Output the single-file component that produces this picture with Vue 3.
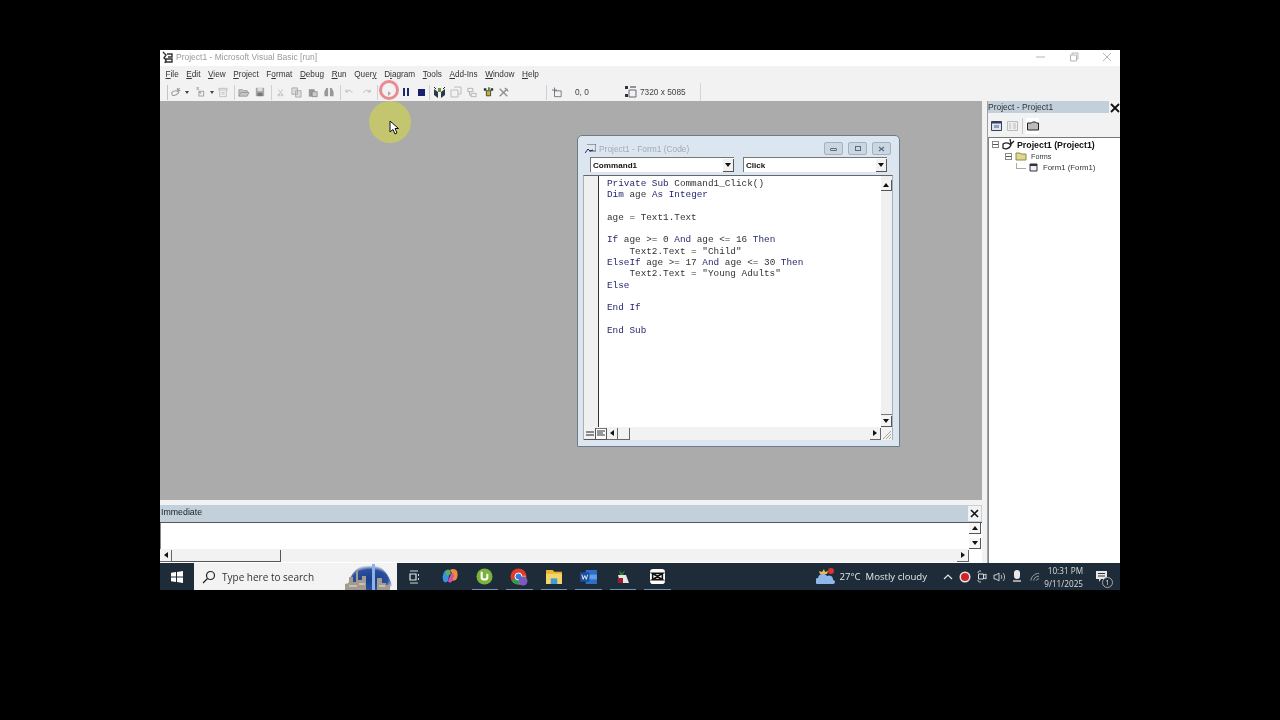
<template>
  <div class="screen">
    <!-- title bar -->
    <div class="titlebar">
      <svg class="app-ico" width="13" height="13" viewBox="0 0 13 13"><path d="M2 1l3 3-2 3 2 2-1 3M6 3h5v3H7M5 8h6v3H5z" fill="none" stroke="#333" stroke-width="1.4"/></svg>
      <span class="title-text">Project1 - Microsoft Visual Basic [run]</span>
      <div class="win-btns">
        <svg width="10" height="10" viewBox="0 0 10 10"><path d="M0 5h9" stroke="#b5b5b5"/></svg>
        <svg width="10" height="10" viewBox="0 0 10 10"><path d="M1.5 3h6v6h-6zM3 3V1h6v6H7.500" fill="none" stroke="#b5b5b5"/></svg>
        <svg width="10" height="10" viewBox="0 0 10 10"><path d="M1 1l8 8M9 1l-8 8" stroke="#b5b5b5"/></svg>
      </div>
    </div>

    <!-- menu -->
    <div class="menubar">
      <span v-for="m in menus" :key="m.t" class="menu-item"><template v-if="m.i > 0">{{ m.t.slice(0, m.i) }}</template><u>{{ m.t[m.i] }}</u>{{ m.t.slice(m.i + 1) }}</span>
    </div>

    <!-- toolbar -->
    <div class="toolbar">
      <div class="tool-row">
        <span class="grip"></span>
        <svg class="t1" width="12" height="12" viewBox="0 0 15 14"><path d="M2 8c2-3 6-3 9-1-1 3-5 5-8 4zM9 2l1 3M12 2l-2 3M13 5h-3" fill="none" stroke="#9a9a9a" stroke-width="1.300"/></svg>
        <span class="drop d1"></span>
        <svg class="t2" width="11" height="12" viewBox="0 0 14 14"><path d="M2 1l3 3M5 1L2 4M5 6h6v6H5zM5 6l3 3" fill="none" stroke="#a5a5a5" stroke-width="1.300"/></svg>
        <span class="drop d2"></span>
        <svg class="t3" width="10" height="11" viewBox="0 0 12 12"><path d="M1 1h10v2H1zM2 3v8h8V3M4 6h4M4 8h4" fill="none" stroke="#bbb"/></svg>
        <span class="sep s1"></span>
        <svg class="t4" width="12" height="11" viewBox="0 0 13 12"><path d="M1 10V3h4l1 1h4v2M1 10l2-4h9l-2 4z" fill="#c7c7c7" stroke="#999"/></svg>
        <svg class="t5" width="10" height="10" viewBox="0 0 12 12"><path d="M1 1h10v10H1z" fill="#a5a5a5"/><path d="M3 1h6v4H3z" fill="#ddd"/><path d="M3 7h6v4H3z" fill="#777"/></svg>
        <span class="sep s2"></span>
        <svg class="t6" width="7" height="11" viewBox="0 0 11 12"><path d="M2 1l5 7M9 1L4 8" stroke="#bbb" fill="none" stroke-width="1.300"/><circle cx="3" cy="10" r="1.500" fill="none" stroke="#aaa"/><circle cx="8" cy="10" r="1.500" fill="none" stroke="#aaa"/></svg>
        <svg class="t7" width="11" height="11" viewBox="0 0 12 12"><path d="M1 1h6v7H1zM5 4h6v7H5z" fill="#ddd" stroke="#aaa"/></svg>
        <svg class="t7b" width="10" height="11" viewBox="0 0 12 12"><path d="M1 2h7v9H1z" fill="#999"/><path d="M5 5h6v6H5z" fill="#ccc" stroke="#888"/></svg>
        <svg class="t7c" width="12" height="11" viewBox="0 0 12 12"><path d="M1 5l2-4h2v9H1zM11 5L9 1H7v9h4z" fill="#999"/></svg>
        <span class="sep s3"></span>
        <svg class="t8" width="9" height="8" viewBox="0 0 11 10"><path d="M1 2v3h3M1 5c2-3 6-3 8 1" fill="none" stroke="#b0b0b0"/></svg>
        <svg class="t9" width="9" height="8" viewBox="0 0 11 10"><path d="M10 2v3H7M10 5C8 2 4 2 2 6" fill="none" stroke="#b0b0b0"/></svg>
        <span class="sep s4"></span>
        <svg class="t10" width="10" height="10" viewBox="0 0 10 10"><path d="M4 4l3 2.500L4 9z" fill="#aaa"/></svg>
        <svg class="t11" width="6" height="8" viewBox="0 0 6 8"><path d="M0 0h2v8H0zM4 0h2v8H4z" fill="#1d2a68"/></svg>
        <svg class="t12" width="7" height="7" viewBox="0 0 7 7"><path d="M0 0h7v7H0z" fill="#16206e"/></svg>
        <span class="sep s5"></span>
        <svg class="t13" width="13" height="13" viewBox="0 0 13 13"><path d="M1 3l4 3v6L1 9zM12 3L8 6v6l4-3z" fill="#2b3a4a"/><path d="M5 2h3v4H5z" fill="#6f8f3a"/><path d="M1 1l2 2M12 1l-2 2" stroke="#222"/></svg>
        <svg class="t14" width="12" height="12" viewBox="0 0 12 12"><path d="M1 4h7v7H1zM4 1h7v7H8" fill="none" stroke="#bcbcbc"/></svg>
        <svg class="t15" width="10" height="11" viewBox="0 0 12 12"><path d="M1 1h6v4H1zM5 7h6v4H5zM3 5v4h2" fill="none" stroke="#aaa"/></svg>
        <svg class="t16" width="11" height="12" viewBox="0 0 13 13"><path d="M1 2h3v3H1zM9 2h3v3H9z" fill="#2a3a2a"/><path d="M4 5h5v6H4z" fill="#c6b52c" stroke="#333"/><path d="M6 1h2v3H6z" fill="#3d7f3a"/></svg>
        <svg class="t17" width="11" height="11" viewBox="0 0 13 13"><path d="M2 2l9 9M11 2L2 11M8 1l4 4" fill="none" stroke="#8d8d8d" stroke-width="1.500"/></svg>
        <span class="sep s6"></span>
        <svg class="t18" width="10" height="11" viewBox="0 0 12 12"><path d="M3 4h8v7H3zM3 0v6M0 3h6" fill="none" stroke="#667"/></svg>
        <span class="pos">0, 0</span>
        <svg width="12" height="12" viewBox="0 0 12 12"><path d="M4 4h7v7H4z" fill="none" stroke="#667"/><path d="M0 0h3v3H0zM0 8h3v3H0z" fill="#333"/><path d="M5 1h6" stroke="#333"/></svg>
        <span class="size">7320 x 5085</span>
      </div>
      <div class="tool-rest"></div>
    </div>

    <!-- work area -->
    <div class="work">
      <div class="left-col">
        <div class="mdi">
          <div class="code-win">
            <div class="cw-title">
              <svg width="11" height="10" viewBox="0 0 11 10"><path d="M2 0h9v7H4" fill="none" stroke="#556"/><path d="M0 9l3-4 2 2 3-1" fill="none" stroke="#225"/></svg>
              <span>Project1 - Form1 (Code)</span>
              <div class="cw-btns">
                <span class="cb"><i class="b-min"></i></span>
                <span class="cb"><i class="b-max"></i></span>
                <span class="cb">
                  <svg width="7" height="6" viewBox="0 0 7 6"><path d="M1 1l5 4M6 1L1 5" stroke="#667" stroke-width="1.200"/></svg>
                </span>
              </div>
            </div>
            <div class="cw-combos">
              <div class="combo"><span>Command1</span><span class="combo-btn"><b class="arr down"></b></span></div>
              <div class="combo"><span>Click</span><span class="combo-btn"><b class="arr down"></b></span></div>
            </div>
            <div class="cw-frame">
              <div class="cw-body">
                <div class="margin"></div>
                <div class="code">
                  <div v-for="(line, i) in code" :key="i" class="line"><span v-for="(s, j) in line" :key="j" :class="{ kw: s.k }">{{ s.t }}</span></div>
                </div>
                <div class="vscroll">
                  <span class="sbtn"><b class="arr up"></b></span>
                  <span class="vtrack"></span>
                  <span class="sbtn"><b class="arr down"></b></span>
                </div>
              </div>
              <div class="cw-bottom">
                <span class="view-btn"><svg width="8" height="5" viewBox="0 0 8 5"><path d="M0 1h8M0 4h8" stroke="#222"/></svg></span>
                <span class="view-btn on"><svg width="8" height="7" viewBox="0 0 8 7"><path d="M0 1h8M0 3h6M0 5h8" stroke="#333"/></svg></span>
                <span class="hbtn"><b class="arr left"></b></span>
                <span class="hthumb"></span>
                <span class="htrack"></span>
                <span class="hbtn end"><b class="arr right"></b></span>
                <svg class="corner" width="10" height="12" viewBox="0 0 10 12"><path d="M9 3l-8 8M9 6l-5 5M9 9l-2 2" stroke="#a5a5a5"/></svg>
              </div>
            </div>
          </div>
        </div>

        <div class="split"></div>
        <div class="imm-title">
          <span>Immediate</span>
          <span class="close-x">
            <svg width="9" height="9" viewBox="0 0 9 9"><path d="M1 1l7 7M8 1L1 8" stroke="#111" stroke-width="1.600"/></svg>
          </span>
        </div>
        <div class="imm-body">
          <div class="imm-main">
            <div class="imm-text"></div>
            <div class="imm-h">
              <span class="hbtn im"><b class="arr left"></b></span>
              <span class="imm-thumb"></span>
              <span class="htrack"></span>
              <span class="hbtn im"><b class="arr right"></b></span>
            </div>
          </div>
          <div class="imm-v">
            <span class="sbtn"><b class="arr up"></b></span>
            <span class="vgap"></span>
            <span class="sbtn"><b class="arr down"></b></span>
          </div>
        </div>
      </div>

      <div class="divider"></div>

      <div class="project">
        <div class="p-title">
          <span>Project - Project1</span>
          <span class="p-close">
            <svg width="10" height="10" viewBox="0 0 10 10"><path d="M1 1l8 8M9 1L1 9" stroke="#111" stroke-width="1.800"/></svg>
          </span>
        </div>
        <div class="p-tools">
          <svg width="11" height="10" viewBox="0 0 11 10"><path d="M.5.5h10v9H.5z" fill="#dfe4ee" stroke="#34405c"/><path d="M.5.5h10v2H.5z" fill="#34405c"/><path d="M3 4h5v3H3z" fill="#8f9fc0"/></svg>
          <svg width="11" height="10" viewBox="0 0 11 10"><path d="M.5.5h10v9H.5z" fill="#eee" stroke="#bbb"/><path d="M2 3h2M2 5h2M2 7h2M6 3h3M6 5h3M6 7h3" stroke="#bbb"/></svg>
          <span class="p-sep"></span>
          <span class="p-folder">
            <svg width="12" height="10" viewBox="0 0 12 10"><path d="M.5 9V2h4l1-1h3l1 1h2v7z" fill="#bbb" stroke="#222"/></svg>
          </span>
        </div>
        <div class="tree">
          <div class="node n0">
            <span class="box"></span>
            <svg width="13" height="12" viewBox="0 0 13 12"><path d="M1 5c3-2 6-1 8 1-1 3-5 5-8 3zM8 0l1 5M12 2L9 5" fill="none" stroke="#222" stroke-width="1.300"/></svg>
            <b>Project1 (Project1)</b>
          </div>
          <div class="node n1">
            <span class="box"></span>
            <svg width="13" height="10" viewBox="0 0 13 10"><path d="M1 9V2h4l1 1h5v6z" fill="#dfd88c" stroke="#8a8a50"/></svg>
            <span class="t-forms">Forms</span>
          </div>
          <div class="node n2">
            <span class="elbow"></span>
            <svg width="11" height="10" viewBox="0 0 11 10"><path d="M1 1h7v7H1z" fill="#eef" stroke="#333"/><path d="M1 1h7v2H1z" fill="#333"/></svg>
            <span class="t-form1">Form1 (Form1)</span>
          </div>
        </div>
      </div>
    </div>

    <!-- taskbar -->
    <div class="taskbar">
      <div class="start">
        <svg width="12" height="12" viewBox="0 0 12 12"><path d="M0 1.700l5-.7v4.600H0zM6 .9L12 0v5.600H6zM0 6.400h5V11l-5-.7zM6 6.400h6V12l-6-.9z" fill="#fff"/></svg>
      </div>
      <div class="search">
        <svg width="14" height="14" viewBox="0 0 14 14"><circle cx="8.500" cy="5.500" r="4" fill="none" stroke="#222" stroke-width="1.200"/><path d="M5.500 8.500L1 13" stroke="#222" stroke-width="1.300"/></svg>
        <span>Type here to search</span>
        <svg class="city" width="52" height="27" viewBox="0 0 52 27">
          <defs>
            <radialGradient id="sky" cx="50%" cy="60%" r="55%">
              <stop offset="0" stop-color="#1a3d8c"/>
              <stop offset=".7" stop-color="#2a4f9c"/>
              <stop offset="1" stop-color="#f3f3f3"/>
            </radialGradient>
          </defs>
          <path d="M4 27C6 9 17 1 27 1s20 9 23 26z" fill="url(#sky)"/>
          <path d="M29 1h3v26h-3z" fill="#8bb4e4"/>
          <path d="M2 27v-6l4-1v-6h4v5h3V9l2-2v10h4v-4h4v14zM34 27V15h5v5h4v2h4v5z" fill="#a39b8f"/>
          <path d="M6 23h8M16 21h6M36 23h6" stroke="#e8e3d8"/>
        </svg>
      </div>
      <div class="apps">
        <span class="app">
          <svg width="11" height="14" viewBox="0 0 11 14"><path d="M1 1h8M1 13h8" stroke="#cfd6da"/><path d="M1 4h6v6H1z" fill="none" stroke="#dfe5e8" stroke-width="1.200"/><path d="M9.500 4v2M9.500 8v2" stroke="#cfd6da"/></svg>
        </span>
        <span class="app copilot">
          <svg width="17" height="17" viewBox="0 0 17 17"><path d="M3 3c2-2 4-2 5 0L6 13c-2 2-4 2-5-1-1-3 0-7 2-9z" fill="#3a8fe0"/><path d="M8 2c2-2 6-1 7 1 1 3 1 6-1 9l-4 1 1-6z" fill="#f08a3c"/><path d="M6 13l3-7c1-2 3 0 3 2l-2 5c-1 2-3 2-4 0z" fill="#d64fb0"/><path d="M3 3l5-1 1 4-4 2z" fill="#55b55a"/></svg>
        </span>
        <span class="app on">
          <svg width="17" height="17" viewBox="0 0 18 18"><circle cx="9" cy="9" r="8.500" fill="#7cb23a"/><path d="M6 4v6c0 3 6 3 6 0V6" fill="none" stroke="#fff" stroke-width="2.200"/></svg>
        </span>
        <span class="app on">
          <svg width="18" height="18" viewBox="0 0 18 18"><circle cx="8.500" cy="8.500" r="8" fill="#e33b2e"/><path d="M8.500 8.500L1.500 12.500A8 8 0 0 0 9 16.500z" fill="#2f9d4e"/><path d="M8.500 8.500l7-1a8 8 0 0 1-6.500 9z" fill="#f3c11b"/><circle cx="8.500" cy="8.500" r="3.500" fill="#2d7fe0" stroke="#fff"/><circle cx="13" cy="13" r="4.500" fill="#7c5ac2"/></svg>
        </span>
        <span class="app on">
          <svg width="16" height="14" viewBox="0 0 17 15"><path d="M0 0h7l2 2h8v13H0z" fill="#e8b62c"/><path d="M0 4h17v11H0z" fill="#f6d568"/><path d="M5 9h7v6H5z" fill="#3f9ad6"/></svg>
        </span>
        <span class="app on">
          <svg width="17" height="14" viewBox="0 0 18 15"><path d="M6 0h12v15H6z" fill="#2f6fc7"/><path d="M6 5h12v5H6z" fill="#5fa0e6"/><path d="M0 2.500h10v10H0z" fill="#1b4f9f"/><path d="M2 5l1.300 5L5 6l1.700 4L8 5" fill="none" stroke="#fff" stroke-width=".9"/></svg>
        </span>
        <span class="app on">
          <svg width="16" height="16" viewBox="0 0 16 16"><path d="M4 1l3 3 3-3-2 5H5z" fill="#2c7a34"/><path d="M3 6h8l3 8H5z" fill="#e6e6ea"/><path d="M3 9h5v5H3z" fill="#9b1f2c"/></svg>
        </span>
        <span class="app on">
          <svg width="15" height="15" viewBox="0 0 17 17"><rect width="17" height="17" rx="3.500" fill="#fff"/><path d="M3 5h11L3 12h11zM3 5v7M14 5v7" fill="none" stroke="#111" stroke-width="1.800"/></svg>
        </span>
      </div>
      <div class="spacer"></div>
      <div class="tray">
        <svg class="weather" width="20" height="17" viewBox="0 0 20 17"><path d="M8 1l1 3 3-1-1 3h-7l-1-3 3 1z" fill="#f2b84a"/><path d="M2 16a3 3 0 0 1 0-6 5 5 0 0 1 9-2 4 4 0 0 1 6 4 2 2 0 0 1 0 4z" fill="#8fb7ea"/><circle cx="15" cy="3" r="3" fill="#d8352e"/></svg>
        <span class="w-text">27°C&nbsp; Mostly cloudy</span>
        <svg class="chev" width="10" height="6" viewBox="0 0 10 6"><path d="M1 5l4-4 4 4" fill="none" stroke="#e6e6e6" stroke-width="1.200"/></svg>
        <svg class="rec" width="12" height="12" viewBox="0 0 12 12"><circle cx="6" cy="6" r="5.500" fill="#e8e8e8"/><circle cx="6" cy="6" r="4" fill="#d3222a"/></svg>
        <svg class="meet" width="10" height="13" viewBox="0 0 10 13"><path d="M1 3c0-2 1-2 3-2M1 10c0 2 1 2 3 2" fill="none" stroke="#ccc"/><path d="M1.500 4h5v5h-5zM7 5l2-1v5L7 8" fill="none" stroke="#ddd"/></svg>
        <svg class="vol" width="12" height="10" viewBox="0 0 12 10"><path d="M1 3h2l3-2v8L3 7H1z" fill="none" stroke="#ccc"/><path d="M8 3c1 1 1 3 0 4M10 1c2 2 2 6 0 8" fill="none" stroke="#bbb"/></svg>
        <svg class="mic" width="8" height="13" viewBox="0 0 8 13"><rect x="1" width="6" height="9" rx="3" fill="#e8e8e8"/><path d="M0 11h8" stroke="#ccc" stroke-width="1.500"/></svg>
        <svg class="wifi" width="10" height="10" viewBox="0 0 11 10"><path d="M1 9c0-4 4-8 9-8M4 9c0-2 2-5 6-5M7 9c0-1 1-2 3-2" fill="none" stroke="#aaa"/></svg>
        <div class="clock"><span>10:31 PM</span><span>9/11/2025</span></div>
        <span class="notif">
          <svg width="14" height="14" viewBox="0 0 14 14"><path d="M1 1h11v8H6l-2 3V9H1z" fill="#e8e8e8"/><path d="M3 3.500h7M3 6h7" stroke="#333"/></svg>
          <em>1</em>
        </span>
      </div>
    </div>

    <!-- recording overlays -->
    <div class="hl"></div>
    <div class="ring"></div>
    <svg class="cursor" width="10" height="15" viewBox="0 0 10 15"><path d="M1 1v11l3-2.500 2 4.500 2-1-2-4.500h3.500z" fill="#fff" stroke="#111"/></svg>
  </div>
</template>

<script setup>
const menus = [
  { t: 'File', i: 0 },
  { t: 'Edit', i: 0 },
  { t: 'View', i: 0 },
  { t: 'Project', i: 0 },
  { t: 'Format', i: 1 },
  { t: 'Debug', i: 0 },
  { t: 'Run', i: 0 },
  { t: 'Query', i: 4 },
  { t: 'Diagram', i: 1 },
  { t: 'Tools', i: 0 },
  { t: 'Add-Ins', i: 0 },
  { t: 'Window', i: 0 },
  { t: 'Help', i: 0 }
]

// k marks the keywords, drawn in dark blue
const kw = (t) => ({ t, k: true })
const tx = (t) => ({ t, k: false })

const code = [
  [kw('Private Sub'), tx(' Command1_Click()')],
  [kw('Dim'), tx(' age '), kw('As Integer')],
  [],
  [tx('age = Text1.Text')],
  [],
  [kw('If'), tx(' age >= 0 '), kw('And'), tx(' age <= 16 '), kw('Then')],
  [tx('    Text2.Text = "Child"')],
  [kw('ElseIf'), tx(' age >= 17 '), kw('And'), tx(' age <= 30 '), kw('Then')],
  [tx('    Text2.Text = "Young Adults"')],
  [kw('Else')],
  [],
  [kw('End If')],
  [],
  [kw('End Sub')]
]
</script>

<style>
html, body {
  margin: 0;
  background: #000;
}
</style>

<style scoped>
.screen {
  position: relative;
  width: 960px;
  height: 540px;
  margin: 50px 0 0 160px;
  display: flex;
  flex-direction: column;
  overflow: hidden;
  background: #f2f2f2;
  font-family: "Liberation Sans", Arial, sans-serif;
  font-size: 9px;
  color: #222;
  filter: blur(0.3px);
}
svg { display: block; flex: none; }

.titlebar {
  height: 16px;
  background: #fff;
  display: flex;
  align-items: center;
  padding: 0 8px 2px 1px;
  box-sizing: border-box;
  gap: 2px;
}
.title-text { color: #9b9b9b; font-size: 8.500px; }
.win-btns { margin-left: auto; display: flex; gap: 23px; }

.menubar {
  height: 17px;
  display: flex;
  align-items: center;
  gap: 7.600px;
  padding: 0 0 1px 5.500px;
  box-sizing: border-box;
  font-size: 8.200px;
  color: #333;
}

.toolbar {
  height: 18px;
  display: flex;
  border-bottom: 1px solid #a0a0a0;
  box-sizing: content-box;
  margin-bottom: -1px;
}
.tool-row {
  width: 541px;
  display: flex;
  align-items: center;
  padding-left: 7px;
  box-sizing: border-box;
  border-right: 1px solid #d5d5d5;
  white-space: nowrap;
}
.tool-rest { flex: 1; }
.grip { width: 2px; height: 15px; border-left: 1px solid #c4c4c4; box-sizing: border-box; margin-right: 1px; }
.drop { width: 0; height: 0; border: 2px solid transparent; border-top: 3px solid #444; margin-top: 3px; }
.sep { width: 1px; height: 15px; background: #d0d0d0; flex: none; }
.d1 { margin-left: 3px; }
.t2 { margin-left: 6px; }
.d2 { margin-left: 4px; }
.t3 { margin-left: 4px; }
.s1 { margin-left: 6px; }
.t4 { margin-left: 3px; }
.t5 { margin-left: 5px; }
.s2 { margin-left: 6px; }
.t6 { margin-left: 5px; }
.t7 { margin-left: 7px; }
.t7b { margin-left: 6px; }
.t7c { margin-left: 5px; }
.s3 { margin-left: 5px; }
.t8 { margin-left: 4px; }
.t9 { margin-left: 8px; }
.s4 { margin-left: 6px; }
.t10 { margin-left: 6px; }
.t11 { margin-left: 9px; }
.t12 { margin-left: 9px; }
.s5 { margin-left: 4px; }
.t13 { margin-left: 3px; }
.t14 { margin-left: 4px; }
.t15 { margin-left: 5px; }
.t16 { margin-left: 6px; }
.t17 { margin-left: 4px; }
.s6 { margin-left: 37px; }
.t18 { margin-left: 5px; }
.pos { margin-left: 13px; width: 50px; flex: none; color: #444; font-size: 8.300px; }
.size { margin-left: 3px; color: #444; font-size: 8.300px; }

.work { flex: 1; min-height: 0; display: flex; }
.left-col { width: 822px; display: flex; flex-direction: column; }
.mdi { position: relative; flex: 1; background: #ababab; }

.code-win {
  position: absolute;
  left: 417px;
  top: 34px;
  width: 323px;
  height: 312px;
  box-sizing: border-box;
  border: 1px solid #6f7c86;
  border-radius: 5px 5px 1px 1px;
  background: #dbe6f0;
  padding: 0 6px 6px 5px;
  display: flex;
  flex-direction: column;
}
.cw-title {
  height: 21px;
  flex: none;
  display: flex;
  align-items: center;
  gap: 3px;
  padding: 4px 0 0 2px;
  box-sizing: border-box;
  color: #a3abb3;
  font-size: 8.400px;
}
.cw-btns { margin-left: auto; display: flex; gap: 5px; margin-right: 2px; }
.cb {
  width: 19px;
  height: 13px;
  box-sizing: border-box;
  border: 1px solid #a2b2c0;
  border-radius: 2px;
  background: #c9d7e3;
  display: flex;
  align-items: center;
  justify-content: center;
}
.b-min { width: 7px; height: 3px; border: 1px solid #667; border-radius: 1px; box-sizing: border-box; margin-top: 2px; }
.b-max { width: 6px; height: 5px; border: 1px solid #667; box-sizing: border-box; }
.cw-combos { display: flex; gap: 9px; padding-left: 7px; margin-right: 6px; flex: none; }
.combo {
  flex: 1;
  height: 15px;
  background: #fff;
  border-top: 1px solid #777;
  border-left: 1px solid #777;
  box-sizing: border-box;
  display: flex;
  align-items: center;
  justify-content: space-between;
  padding: 0 0 0 2px;
  color: #111;
  font-size: 8.100px;
  font-weight: 700;
}
.combo-btn {
  width: 11px;
  height: 13px;
  background: #f2f2f2;
  border-right: 1px solid #555;
  border-bottom: 1px solid #555;
  box-sizing: border-box;
  display: flex;
  align-items: center;
  justify-content: center;
}
.arr { width: 0; height: 0; border: 3px solid transparent; display: block; flex: none; }
.arr.down { border-top: 4px solid #111; border-bottom: 0; }
.arr.up { border-bottom: 4px solid #111; border-top: 0; }
.arr.left { border-right: 4px solid #111; border-left: 0; }
.arr.right { border-left: 4px solid #111; border-right: 0; }
.cw-frame {
  flex: 1;
  min-height: 0;
  margin-top: 3px;
  border-top: 1px solid #666;
  border-left: 1px solid #a5b0b8;
  border-right: 1px solid #a5b0b8;
  display: flex;
  flex-direction: column;
}
.cw-body { flex: 1; min-height: 0; display: flex; }
.margin { width: 14px; background: #f0f0f0; border-right: 1px solid #333; }
.code {
  flex: 1;
  background: #fff;
  padding: 2px 0 0 8px;
  font-family: "Liberation Mono", "Courier New", monospace;
  font-size: 9.350px;
  line-height: 11.300px;
  color: #333;
}
.line { height: 11.300px; white-space: pre; }
.kw { color: #27276f; }
.vscroll { width: 11px; background: #f0f0f0; display: flex; flex-direction: column; }
.sbtn {
  height: 11px;
  flex: none;
  box-sizing: border-box;
  background: #f4f4f4;
  border-right: 1px solid #555;
  border-bottom: 1px solid #555;
  display: flex;
  align-items: center;
  justify-content: center;
}
.vscroll .sbtn:first-child { margin-top: 4px; }
.vtrack { flex: 1; border-bottom: 1px solid #777; margin-bottom: 1px; }
.cw-bottom {
  height: 13px;
  flex: none;
  display: flex;
  align-items: center;
  background: #f2f2f2;
}
.view-btn {
  width: 12px;
  height: 12px;
  box-sizing: border-box;
  border-right: 1px solid #555;
  border-bottom: 1px solid #555;
  display: flex;
  align-items: center;
  justify-content: center;
}
.view-btn.on { width: 11px; background: #fbfbfb; border-top: 1px solid #777; }
.hbtn {
  width: 11px;
  height: 12px;
  flex: none;
  box-sizing: border-box;
  border-right: 1px solid #666;
  border-bottom: 1px solid #666;
  display: flex;
  align-items: center;
  justify-content: center;
}
.hthumb { width: 12px; height: 12px; box-sizing: border-box; border-right: 1px solid #666; border-bottom: 1px solid #666; }
.htrack { flex: 1; }
.corner { margin-left: 1px; }

.split { height: 5px; background: #f2f2f2; flex: none; }
.imm-title {
  height: 17px;
  flex: none;
  box-sizing: border-box;
  background: #c2d0dc;
  display: flex;
  align-items: center;
  justify-content: space-between;
  padding-left: 1px;
  font-size: 8.800px;
  color: #222;
}
.imm-title > span:first-child { margin-bottom: 4px; }
.close-x {
  width: 13px;
  height: 15px;
  margin-right: 1px;
  background: #f2f2f2;
  display: flex;
  align-items: center;
  justify-content: center;
}
.imm-body { height: 41px; flex: none; display: flex; border-top: 1px solid #555; background: #fff; box-sizing: border-box; padding-bottom: 1px; }
.imm-main { flex: 1; display: flex; flex-direction: column; }
.imm-text { flex: 1; border-left: 1px solid #888; }
.imm-h { height: 13px; display: flex; align-items: center; background: #f2f2f2; }
.hbtn.im { width: 12px; }
.imm-thumb { width: 109px; height: 12px; box-sizing: border-box; background: #f2f2f2; border-right: 1px solid #555; border-bottom: 1px solid #555; }
.imm-v { width: 12px; margin-right: 1px; display: flex; flex-direction: column; }
.imm-v .sbtn { background: #f6f6f6; }
.vgap { height: 4px; flex: none; }

.divider { width: 6px; background: #f2f2f2; border-right: 1px solid #9f9f9f; box-sizing: border-box; }
.project { flex: 1; background: #fff; display: flex; flex-direction: column; }
.p-title {
  height: 12px;
  flex: none;
  background: #c2d0dc;
  display: flex;
  align-items: center;
  justify-content: space-between;
  font-size: 8.500px;
  color: #333;
}
.p-title > span:first-child { margin-top: -1px; }
.p-close {
  width: 11px;
  height: 14px;
  margin-top: 2px;
  background: #f4f4f4;
  display: flex;
  align-items: center;
  justify-content: center;
}
.p-tools {
  height: 24px;
  flex: none;
  background: #f2f2f2;
  display: flex;
  align-items: center;
  gap: 5px;
  padding: 2px 0 0 3px;
  box-sizing: border-box;
}
.p-sep { width: 1px; height: 16px; background: #c9c9c9; margin-left: -1px; }
.p-folder { display: flex; align-items: center; justify-content: center; width: 13px; height: 16px; background: #fff; margin-left: -2px; }
.tree { flex: 1; border-top: 1px solid #777; border-left: 1px solid #888; padding-top: 1px; }
.node { height: 11.500px; display: flex; align-items: center; gap: 3px; font-size: 8px; color: #333; white-space: nowrap; }
.node b { color: #111; font-size: 8.800px; margin-left: -1px; }
.t-forms { font-size: 7.200px; }
.t-form1 { font-size: 7.800px; }
.n0 { padding-left: 3px; }
.n1 { padding-left: 16px; }
.n2 { padding-left: 27px; }
.box { width: 7px; height: 7px; box-sizing: border-box; border: 1px solid #888; background: #fff; }
.box::after { content: ""; display: block; width: 5px; height: 1px; background: #555; margin-top: 2px; }
.elbow { width: 10px; height: 6px; box-sizing: border-box; border-left: 1px solid #aaa; border-bottom: 1px solid #aaa; margin-top: -3px; }

.taskbar {
  height: 27px;
  flex: none;
  background: #1d2c38;
  display: flex;
  align-items: stretch;
  color: #e8e8e8;
  font-family: "Open Sans", "Noto Sans", sans-serif;
}
.start { width: 34px; flex: none; display: flex; align-items: center; justify-content: center; }
.search {
  width: 203px;
  flex: none;
  background: #f3f3f3;
  display: flex;
  align-items: center;
  padding-left: 8px;
  box-sizing: border-box;
  color: #333;
  font-size: 10px;
  white-space: nowrap;
}
.search span { margin-left: 6px; }
.city { margin-left: auto; margin-right: 2px; }
.apps { display: flex; flex: none; }
.app {
  width: 34.500px;
  display: flex;
  align-items: center;
  justify-content: center;
  position: relative;
}
.copilot { margin-left: 1.500px; }
.app.on::after {
  content: "";
  position: absolute;
  left: 4px;
  right: 4px;
  bottom: 0;
  height: 1.500px;
  background: #6d94b5;
}
.spacer { flex: 1; }
.tray { display: flex; flex: none; align-items: center; padding-right: 11px; }
.w-text { margin-left: 3px; font-size: 9.600px; color: #e6e6e6; white-space: nowrap; }
.chev { margin-left: 16px; }
.rec { margin-left: 6px; }
.meet { margin-left: 6px; }
.vol { margin-left: 6px; }
.mic { margin-left: 8px; }
.wifi { margin-left: 9px; }
.clock {
  margin-left: 6px;
  width: 37px;
  display: flex;
  flex-direction: column;
  align-items: flex-end;
  font-size: 8.200px;
  line-height: 13px;
  color: #ddd;
  white-space: nowrap;
}
.notif { position: relative; margin-left: 12px; }
.notif em {
  position: absolute;
  right: -4px;
  bottom: -4px;
  width: 11px;
  height: 11px;
  border-radius: 50%;
  border: 1px solid #aaa;
  background: #1d2c38;
  box-sizing: border-box;
  font-style: normal;
  font-size: 7px;
  line-height: 9px;
  text-align: center;
}

.hl {
  position: absolute;
  left: 209px;
  top: 51px;
  width: 42px;
  height: 42px;
  border-radius: 50%;
  background: #c4c66f;
}
.ring {
  position: absolute;
  left: 219px;
  top: 30px;
  width: 20px;
  height: 20px;
  box-sizing: border-box;
  border-radius: 50%;
  border: 3px solid #ea8a92;
}
.cursor {
  position: absolute;
  left: 229px;
  top: 70px;
}
</style>
